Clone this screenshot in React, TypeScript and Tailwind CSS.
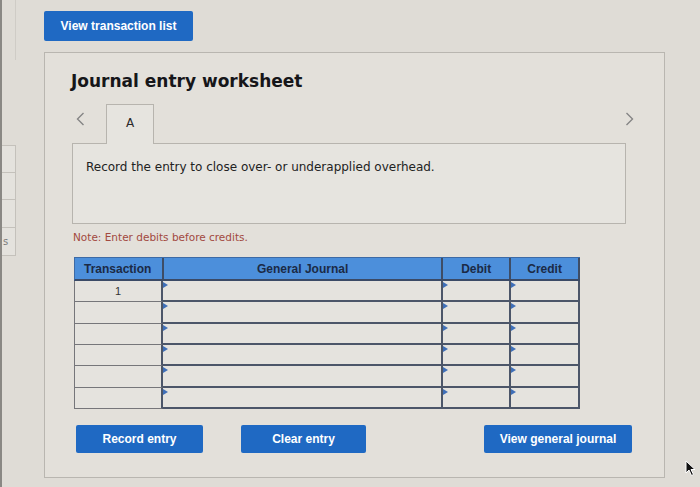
import React from 'react';

const rows = [
  { n: '1', h: 'h-[21px]' },
  { n: '', h: 'h-[22px]' },
  { n: '', h: 'h-[21px]' },
  { n: '', h: 'h-[21px]' },
  { n: '', h: 'h-[22px]' },
  { n: '', h: 'h-[21px]' },
];

function Flag() {
  return (
    <svg width="5" height="6" viewBox="0 0 5 6" className="block">
      <path d="M0 0 L5 3 L0 6 Z" fill="#3f6fb8" />
    </svg>
  );
}

function InputCell({ w }: { w: string }) {
  return (
    <div className={`${w} h-full border-b-2 border-r-2 border-[#4c5669] pt-[1px]`}>
      <Flag />
    </div>
  );
}

function BlueButton({ label, w }: { label: string; w: string }) {
  return (
    <button
      className={`${w} h-[28px] rounded-[2px] bg-[#1f69c3] text-white text-[12px] font-bold`}
      style={{ fontFamily: '"Liberation Sans", Arial, sans-serif' }}
    >
      {label}
    </button>
  );
}

function Chevron({ dir }: { dir: 'left' | 'right' }) {
  return (
    <svg width="9" height="14" viewBox="0 0 9 14" className="block">
      <path
        d={dir === 'left' ? 'M7.5 1 L1.5 7 L7.5 13' : 'M1.5 1 L7.5 7 L1.5 13'}
        fill="none"
        stroke="#858585"
        strokeWidth="1.4"
      />
    </svg>
  );
}

export default function App() {
  return (
    <div
      className="w-[700px] h-[487px] overflow-hidden bg-[#dfdcd6] flex relative"
      style={{ fontFamily: '"DejaVu Sans", Verdana, sans-serif' }}
    >
      {/* cut-off side panel */}
      <div className="w-[16px] h-full flex">
        <div className="w-[2px] h-full bg-[#8a8884]" />
        <div className="flex-1 flex flex-col">
          <div className="h-[60px] border-r border-[#cfccc6]" />
          <div className="h-[85px]" />
          <div className="h-[28px] border-y border-r border-[#c4c1bb] bg-[#e4e2dd]" />
          <div className="h-[27px] border-b border-r border-[#c4c1bb] bg-[#e4e2dd]" />
          <div className="h-[28px] border-b border-r border-[#c4c1bb] bg-[#e4e2dd]" />
          <div className="h-[28px] border-b border-r border-[#c4c1bb] bg-[#e4e2dd] flex items-center pl-[1px] text-[10px] text-[#7b7b7b]">
            s
          </div>
        </div>
      </div>

      <div className="ml-[28px] pt-[11px] flex flex-col">
        <BlueButton label="View transaction list" w="w-[149px] h-[30px]" />

        <div className="mt-[11px] w-[621px] h-[426px] border border-[#b9b6b0] bg-[#e3e0da] pl-[27px] flex flex-col">
          <h1 className="mt-[16px] ml-[-1px] text-[17px] leading-[24px] font-bold text-[#161619]">
            Journal entry worksheet
          </h1>

          <div className="mt-[10px] w-[566px] h-[40px] flex items-end">
            <div className="w-[34px] h-[40px] pl-[4px] pt-[9px]">
              <Chevron dir="left" />
            </div>
            <div className="w-[48px] h-[40px] border border-b-0 border-[#b7b4ae] bg-[#e6e4df] -mb-px relative z-10 flex justify-center pt-[9px] text-[12px] text-[#2a2a2a]">
              A
            </div>
            <div className="ml-auto pb-[17px] pr-[4px]">
              <Chevron dir="right" />
            </div>
          </div>

          <div className="w-[554px] h-[81px] border border-[#b7b4ae] bg-[#e6e4df] pl-[13px] pt-[15px] text-[12px] leading-[16px] text-[#222]">
            Record the entry to close over- or underapplied overhead.
          </div>

          <div className="mt-[6px] ml-[1px] text-[10.5px] leading-[14px] text-[#a2493f]">Note: Enter debits before credits.</div>

          <div
            className="mt-[13px] ml-[2px] w-[506px] flex flex-col"
            style={{ fontFamily: '"Liberation Sans", Arial, sans-serif' }}
          >
            <div className="h-[24px] flex bg-[#4c8fdb] border-t border-l border-[#3d6aa5] border-b-2 border-b-[#3b4a66] text-[12px] font-bold text-[#1b2a45]">
              <div className="w-[89px] border-r-2 border-[#3e4d66] flex items-center pl-[9px]">Transaction</div>
              <div className="w-[280px] border-r-2 border-[#3e4d66] flex items-center justify-center">General Journal</div>
              <div className="w-[68px] border-r-2 border-[#3e4d66] flex items-center justify-center">Debit</div>
              <div className="w-[69px] border-r-2 border-[#3e4d66] flex items-center justify-center">Credit</div>
            </div>
            {rows.map((r, i) => (
              <div key={i} className={`${r.h} flex bg-[#e5e3de]`}>
                <div className="w-[89px] h-full border-l border-b border-r-2 border-[#76767a] border-r-[#4c5669] flex items-center justify-center text-[11px] text-[#333]">
                  {r.n}
                </div>
                <InputCell w="w-[280px]" />
                <InputCell w="w-[68px]" />
                <InputCell w="w-[69px]" />
              </div>
            ))}
          </div>

          <div className="mt-[16px] ml-[4px] flex">
            <BlueButton label="Record entry" w="w-[127px]" />
            <div className="ml-[38px]">
              <BlueButton label="Clear entry" w="w-[125px]" />
            </div>
            <div className="ml-[118px]">
              <BlueButton label="View general journal" w="w-[148px]" />
            </div>
          </div>
        </div>
      </div>

      {/* mouse pointer */}
      <svg width="12" height="17" viewBox="0 0 12 17" className="absolute left-[685px] top-[460px]">
        <path d="M1 1 L1 13 L4 10 L6.5 15.5 L8.5 14.5 L6 9.5 L10 9.5 Z" fill="#111" stroke="#fff" strokeWidth="1" />
      </svg>
    </div>
  );
}
